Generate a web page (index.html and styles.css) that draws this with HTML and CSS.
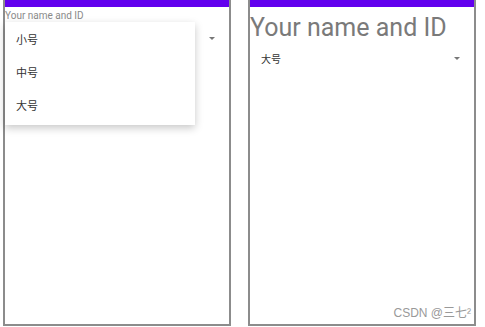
FILE: index.html
```html
<!DOCTYPE html>
<html lang="en">
<head>
  <meta charset="UTF-8" />
  <title>Spinner demo</title>
  <link rel="stylesheet" href="styles.css">
</head>
<body>
  <div class="screens">
    <!-- Spinner open -->
    <div class="phone">
      <div class="app-bar"></div>
      <div class="content">
        <div class="label">Your name and ID</div>
        <div class="spinner open">
          <span class="value">小号</span>
          <span class="arrow"></span>
        </div>
        <ul class="menu">
          <li>小号</li>
          <li>中号</li>
          <li>大号</li>
        </ul>
      </div>
    </div>

    <!-- After choosing 大号 -->
    <div class="phone">
      <div class="app-bar"></div>
      <div class="content">
        <div class="label big">Your name and ID</div>
        <div class="spinner">
          <span class="value">大号</span>
          <span class="arrow"></span>
        </div>
      </div>
    </div>
  </div>

  <div class="watermark">CSDN @三七²</div>
</body>
</html>
```

FILE: styles.css
```css
* {
  margin: 0;
  padding: 0;
  box-sizing: border-box;
}
body {
  font-family: Roboto, "Noto Sans CJK SC", sans-serif;
  background: #fff;
  width: 485px;
  height: 327px;
  overflow: hidden;
  position: relative;
}
.screens {
  display: flex;
  gap: 17px;
  padding-left: 3px;
}
.phone {
  width: 228px;
  height: 326px;
  border: 2px solid #8c8c8c;
  border-top: none;
  display: flex;
  flex-direction: column;
}
.app-bar {
  height: 7px;
  background: #6200ee;
}
.content {
  position: relative;
  flex: 1;
}
.label {
  font-size: 10px;
  color: #8a8a8a;
  line-height: 13px;
  margin-top: 2px;
}
.label.big {
  font-size: 25px;
  line-height: 30px;
  margin-top: 6px;
  color: #7a7a7a;
}
.spinner {
  display: flex;
  align-items: center;
  justify-content: space-between;
  height: 30px;
  padding: 0 14px 0 11px;
  font-size: 10px;
  color: #333;
}
.spinner.open {
  height: 32px;
}
/* value is covered by the open menu */
.spinner.open .value {
  visibility: hidden;
}
.spinner .arrow {
  width: 0;
  height: 0;
  border-left: 3px solid transparent;
  border-right: 3px solid transparent;
  border-top: 3px solid #777;
}
.menu {
  position: absolute;
  top: 15px;
  left: 0;
  width: 190px;
  list-style: none;
  background: #fff;
  padding: 2px 0;
  box-shadow: 0 3px 8px rgba(0, 0, 0, 0.22);
}
.menu li {
  height: 33px;
  line-height: 33px;
  padding-left: 11px;
  font-size: 11px;
  color: #333;
}
.watermark {
  position: absolute;
  right: 14px;
  top: 303px;
  font-family: "Liberation Sans", "Noto Sans CJK SC", sans-serif;
  font-size: 12px;
  color: #999;
}
```
